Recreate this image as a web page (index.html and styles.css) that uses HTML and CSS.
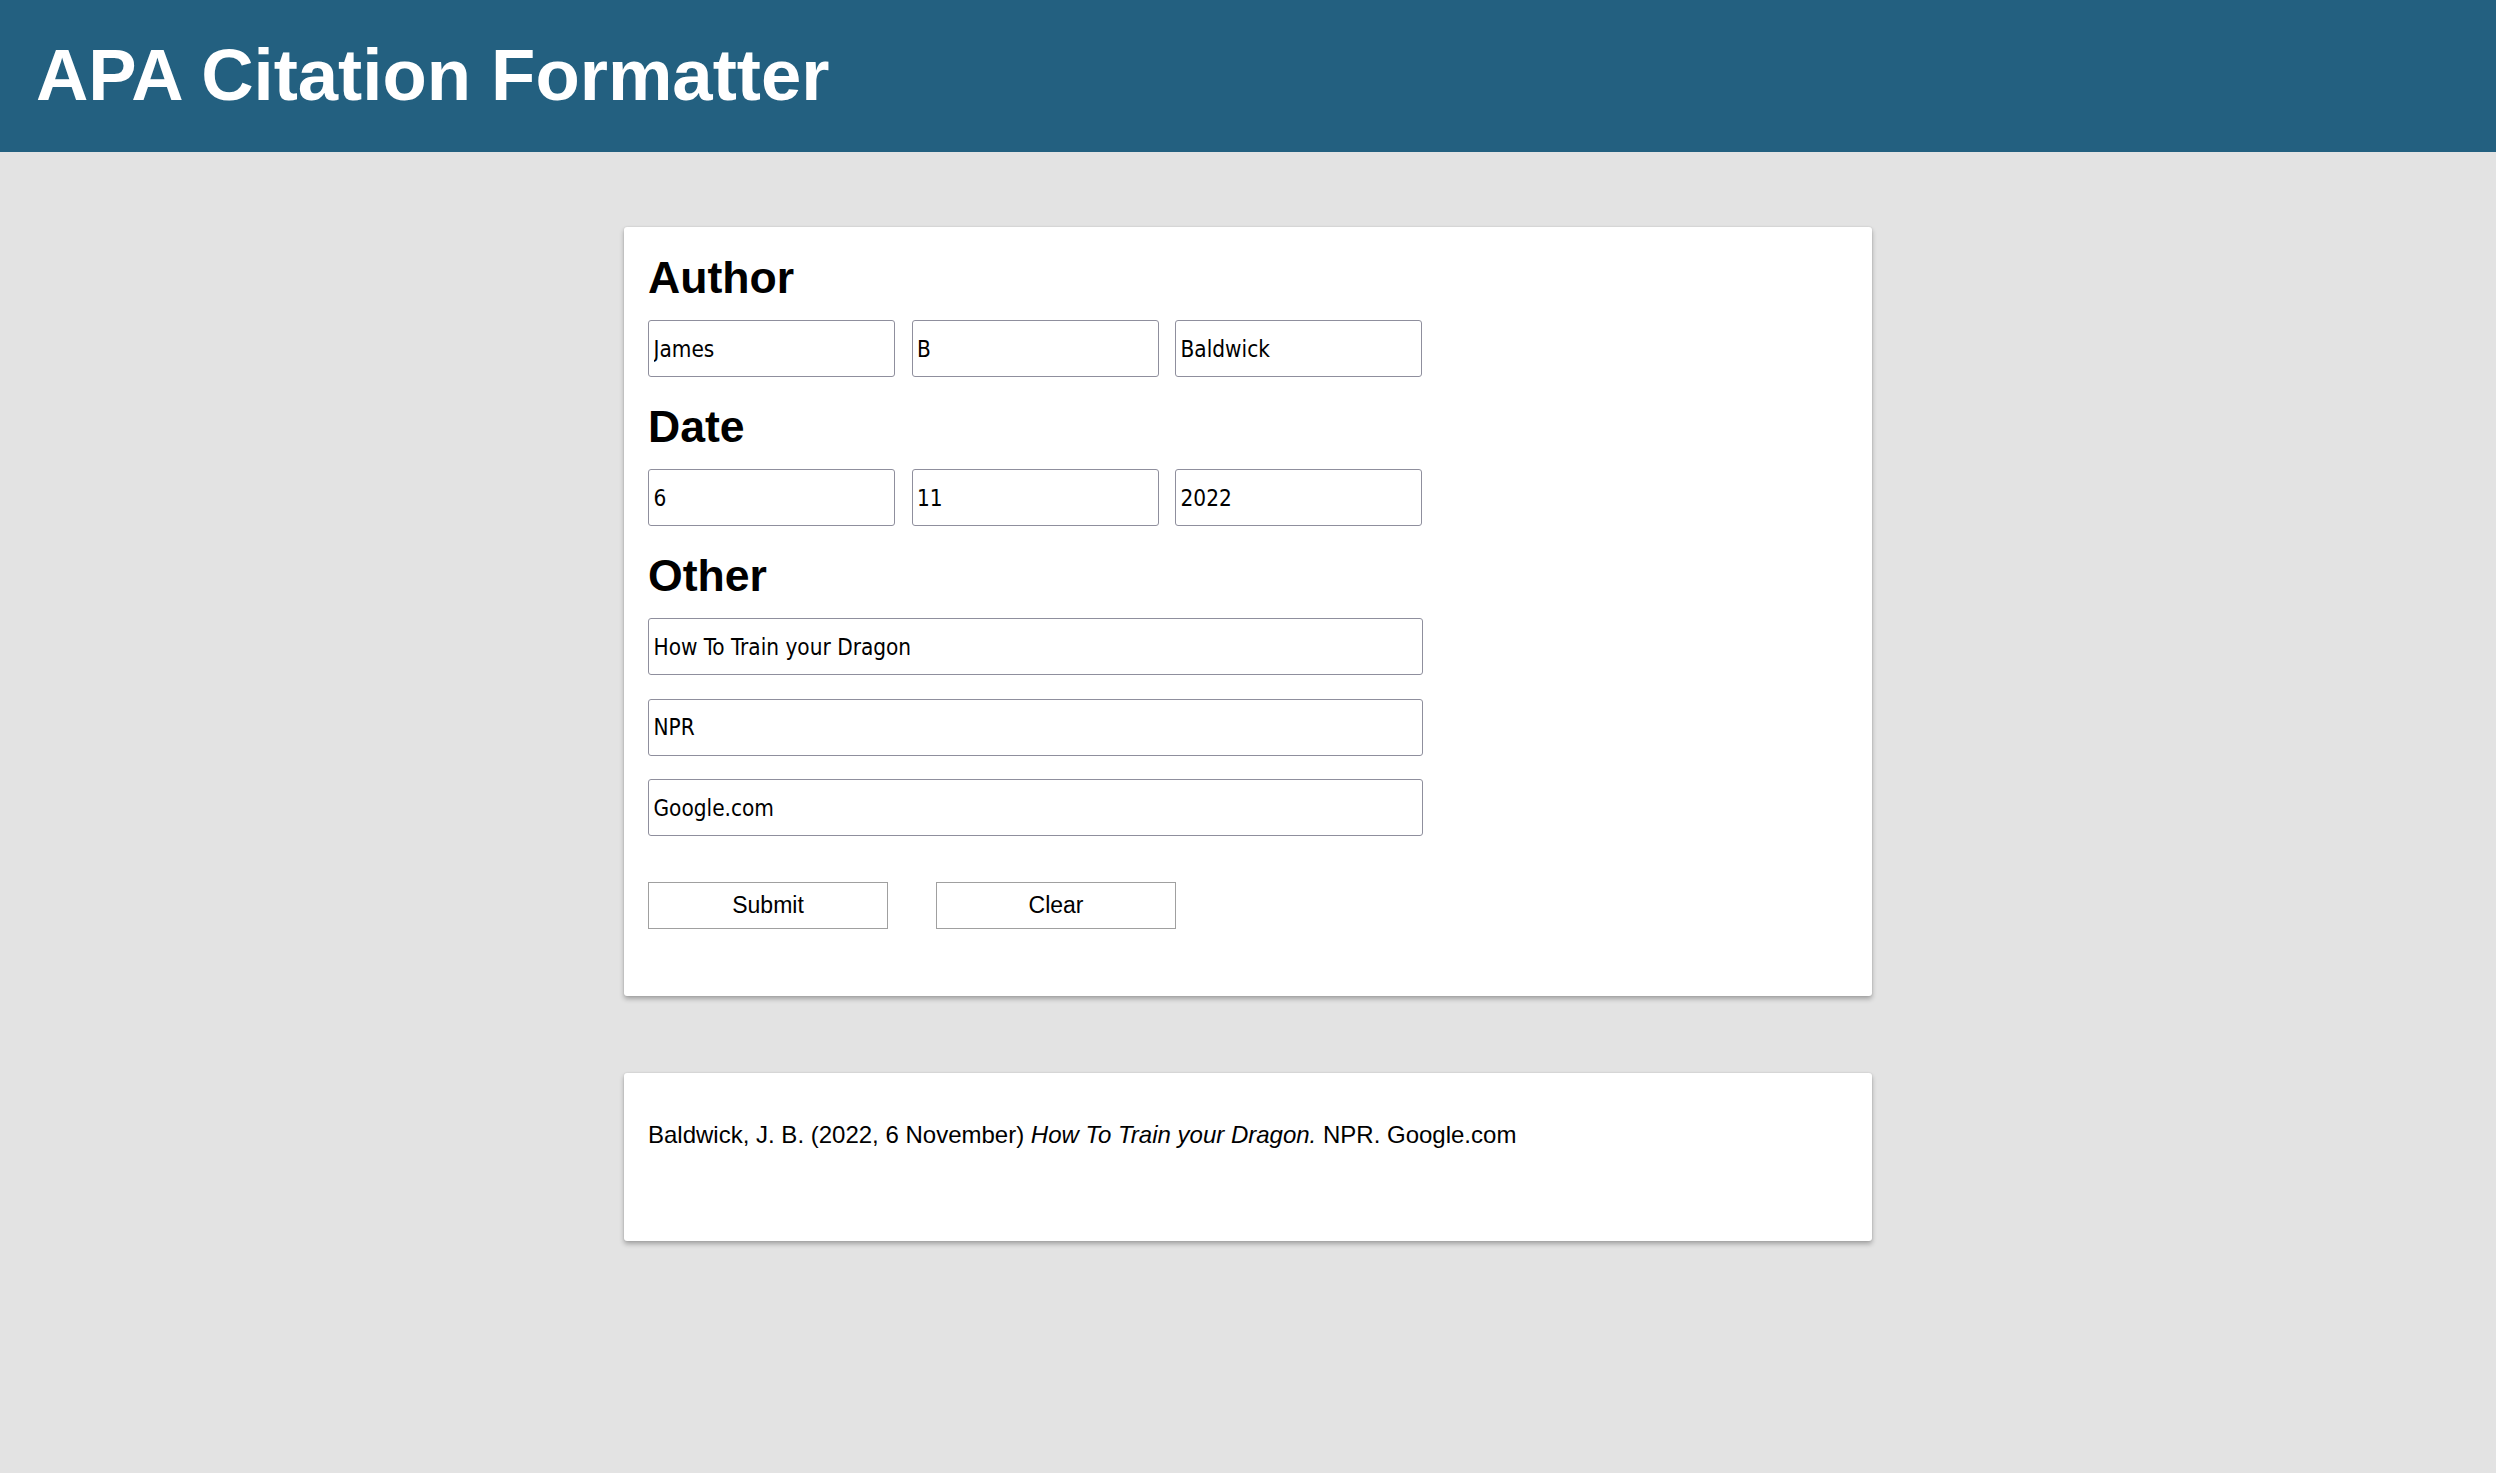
FILE: index.html
```html
<!DOCTYPE html>
<html lang="en">
<head>
<meta charset="utf-8">
<title>APA Citation Formatter</title>
<link rel="stylesheet" href="styles.css">
</head>
<body>
<header class="topbar">
  <h1 class="title">APA Citation Formatter</h1>
</header>
<main class="content">
  <section class="card form-card">
    <h2 class="section-title">Author</h2>
    <div class="row">
      <input class="field" type="text" value="James">
      <input class="field" type="text" value="B">
      <input class="field" type="text" value="Baldwick">
    </div>
    <h2 class="section-title">Date</h2>
    <div class="row">
      <input class="field" type="text" value="6">
      <input class="field" type="text" value="11">
      <input class="field" type="text" value="2022">
    </div>
    <h2 class="section-title">Other</h2>
    <div class="stack">
      <input class="field wide" type="text" value="How To Train your Dragon">
      <input class="field wide" type="text" value="NPR">
      <input class="field wide" type="text" value="Google.com">
    </div>
    <div class="actions">
      <button class="btn" type="button">Submit</button>
      <button class="btn" type="button">Clear</button>
    </div>
  </section>
  <section class="card result-card">
    <p class="citation">Baldwick, J. B. (2022, 6 November) <em>How To Train your Dragon.</em> NPR. Google.com</p>
  </section>
</main>
</body>
</html>
```

FILE: styles.css
```css
html, body {
  margin: 0;
  padding: 0;
}
body {
  background: #e3e3e3;
  font-family: "Liberation Sans", Arial, sans-serif;
  color: #000;
  min-height: 1473px;
}
.topbar {
  background: #236080;
  height: 152px;
  box-sizing: border-box;
  padding: 33px 36px 0;
}
.title {
  margin: 0;
  color: #fff;
  font-size: 72.5px;
  font-weight: bold;
  line-height: 83px;
}
.content {
  display: flex;
  flex-direction: column;
  align-items: center;
  gap: 77px;
  padding-top: 75px;
}
.card {
  width: 1248px;
  box-sizing: border-box;
  background: #fff;
  border-radius: 3px;
  box-shadow: 0 3px 5px rgba(0, 0, 0, 0.28), 0 0 2px rgba(0, 0, 0, 0.12);
}
.form-card {
  padding: 26px 24px 66.5px;
}
.section-title {
  margin: 0 0 16.5px;
  font-size: 44.6px;
  font-weight: bold;
  line-height: 50.6px;
}
.row {
  display: flex;
  gap: 16.5px;
  margin-bottom: 25px;
}
.row .field {
  width: 247px;
}
.stack {
  display: flex;
  flex-direction: column;
  gap: 23.5px;
}
.field {
  height: 57px;
  box-sizing: border-box;
  margin: 0;
  border: 1.5px solid #8f8f9d;
  border-radius: 3px;
  padding: 0 4.5px;
  background: #fff;
  color: #000;
  font-family: "DejaVu Sans Condensed", "DejaVu Sans", sans-serif;
  font-stretch: condensed;
  font-size: 22.4px;
}
.field.wide {
  width: 775px;
}
.actions {
  display: flex;
  gap: 48px;
  margin-top: 46px;
}
.btn {
  width: 240px;
  height: 47px;
  box-sizing: border-box;
  margin: 0;
  border: 1.5px solid #a0a0a0;
  border-radius: 0;
  background: #fff;
  color: #000;
  font-family: "Liberation Sans", Arial, sans-serif;
  font-size: 23px;
  padding: 0;
}
.result-card {
  padding: 48px 24px 93px;
}
.citation {
  margin: 0;
  font-size: 24px;
  line-height: 27.6px;
}
.citation em {
  font-style: italic;
}
```
